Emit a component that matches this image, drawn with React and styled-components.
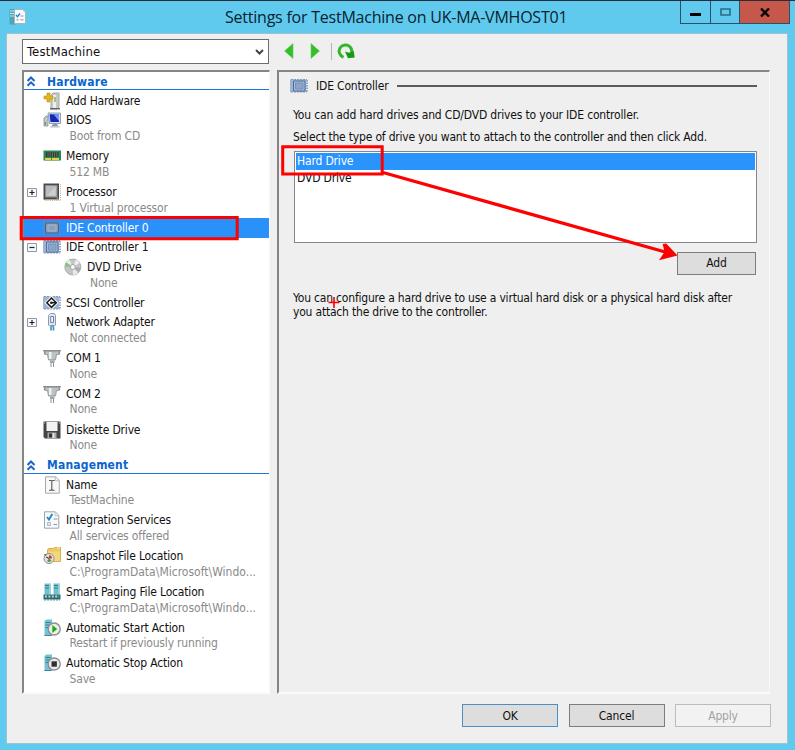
import React, { useState } from "react";
import styled, { createGlobalStyle } from "styled-components";

const GlobalStyle = createGlobalStyle`
  body {
    margin: 0;
    overflow: hidden;
  }
`;

const Window = styled.div`
  position: relative;
  display: flex;
  flex-direction: column;
  width: 795px;
  height: 750px;
  padding: 0 7px 6px 6px;
  box-sizing: border-box;
  border-top: 1px solid #2a2c3c;
  background: #5fcaed;
  color: #111;
  font-family: "DejaVu Sans Condensed", "DejaVu Sans", sans-serif;
  font-size: 12px;
  letter-spacing: -0.17px;
`;

const TitleBar = styled.div`
  display: flex;
  align-items: flex-start;
  height: 32px;
  flex: none;
`;

const TitleIcon = styled.div`
  width: 17px;
  height: 17px;
  margin: 7px 0 0 3px;
`;

const Title = styled.div`
  flex: 1;
  padding: 5px 0 0 199px;
  color: #0a2230;
  font-family: "Open Sans", "Noto Sans", sans-serif;
  font-size: 16px;
  line-height: 22px;
  letter-spacing: -0.23px;
  white-space: nowrap;
`;

const WindowButtons = styled.div`
  display: flex;
  height: 23px;
  margin-right: -2px;
  box-sizing: border-box;
  border: 1px solid #285266;
  border-top: 0;
`;

const WindowButton = styled.div`
  display: flex;
  align-items: center;
  justify-content: center;
  width: ${(props) => props.$width}px;
  background: ${(props) => (props.$close ? "#c5574b" : "transparent")};
  & + & {
    border-left: 1px solid #285266;
  }
`;

const Client = styled.div`
  display: flex;
  flex-direction: column;
  flex: 1;
  padding: 5px 17px 0 15px;
  box-sizing: border-box;
  border: 1px solid #9cc3d2;
  background: #efefef;
`;

const Toolbar = styled.div`
  display: flex;
  align-items: center;
  height: 25px;
  flex: none;
`;

const Combo = styled.div`
  display: flex;
  align-items: center;
  justify-content: space-between;
  width: 247px;
  height: 25px;
  padding: 0 4px 0 4px;
  box-sizing: border-box;
  border: 1px solid #6c6c6c;
  background: #fff;
  font-size: 13px;
  letter-spacing: 0.15px;
`;

const ToolButtons = styled.div`
  display: flex;
  align-items: center;
  height: 23px;
  margin-left: 14px;
  align-self: flex-start;
`;

const Panels = styled.div`
  display: flex;
  gap: 7px;
  height: 624px;
  margin-top: 6px;
  flex: none;
`;

const Sunken = styled.div`
  box-sizing: border-box;
  border: solid;
  border-width: 2px 1px 2px 2px;
  border-color: #858585 #fafafa #fafafa #858585;
`;

const Tree = styled(Sunken)`
  width: 248px;
  flex: none;
  background: #fff;
`;

const GroupHeader = styled.div`
  display: flex;
  align-items: center;
  gap: 10px;
  height: 18px;
  padding: 1px 0 0 2px;
  margin-bottom: 1.2px;
  box-sizing: border-box;
  box-shadow: inset 0 -1px #1a72dc;
  color: #0a64cf;
  font-weight: bold;
  letter-spacing: 0.18px;
`;

const Node = styled.div`
  display: flex;
  align-items: center;
  height: 19.5px;
  padding-left: ${(props) => (props.$level ? 21 : 0)}px;
  background: ${(props) => (props.$selected ? "#2a91fb" : "transparent")};
  color: ${(props) => (props.$selected ? "#fff" : "#111")};
  cursor: default;
  white-space: nowrap;
`;

const Toggle = styled.div`
  display: flex;
  width: 15px;
  height: 9px;
  padding-left: 3px;
`;

const NodeIcon = styled.div`
  display: flex;
  width: 19px;
  height: 18px;
  margin: 0 4px 0 1px;
`;

const Detail = styled.div`
  height: 16.3px;
  padding-left: ${(props) => (props.$level ? 66 : 45.5)}px;
  color: #8a8a8a;
  line-height: 13px;
  letter-spacing: ${(props) => props.$track || -0.17}px;
  white-space: nowrap;
`;

const Content = styled(Sunken)`
  flex: 1;
  padding: 5px 12px 0 13px;
`;

const Caption = styled.div`
  display: flex;
  align-items: center;
  height: 18px;
  &::after {
    content: "";
    flex: 1;
    height: 2px;
    margin-left: 9px;
    background: #5c5c5c;
  }
`;

const CaptionIcon = styled.div`
  display: flex;
  width: 18px;
  height: 18px;
  margin: 0 8px 0 -2px;
`;

const Paragraph = styled.p`
  margin: ${(props) => props.$top}px 0 0 1px;
  line-height: 14.5px;
  letter-spacing: ${(props) => props.$track || -0.17}px;
  white-space: nowrap;
`;

const List = styled.div`
  height: 92px;
  margin: 6px 0 0 2px;
  padding: 1px;
  box-sizing: border-box;
  border: 1px solid #83878d;
  background: #fff;
`;

const Option = styled.div`
  height: 17.5px;
  padding-left: 1px;
  line-height: 17px;
  background: ${(props) => (props.$selected ? "#2a93fc" : "transparent")};
  color: ${(props) => (props.$selected ? "#fff" : "#111")};
`;

const Button = styled.button`
  width: ${(props) => props.$width || 96}px;
  height: 23px;
  padding: 0;
  box-sizing: border-box;
  border: 1px solid ${(props) => (props.$primary ? "#4b8fc4" : "#7d7d7d")};
  border-radius: 0;
  background: #dddddd;
  color: #111;
  font: inherit;
  letter-spacing: inherit;
  &:disabled {
    border-color: #b9bcc0;
    background: #f2f2f2;
    color: #a3a3a3;
  }
`;

const AddRow = styled.div`
  display: flex;
  justify-content: flex-end;
  padding: 9px 1px 0 0;
`;

const Footer = styled.div`
  display: flex;
  justify-content: flex-end;
  gap: 10.5px;
  padding-top: 10px;
  margin-right: -1px;
`;

const Annotations = styled.svg`
  position: absolute;
  top: -1px;
  left: 0;
  pointer-events: none;
`;

const Svg = ({ w = 18, h = 18, children }) => (
  <svg width={w} height={h} viewBox={`0 0 ${w} ${h}`} fill="none">
    {children}
  </svg>
);

const Chip = () => (
  <Svg>
    <path d="M0 2.5h16v12.500H0z" fill="#9fb4d1" />
    <path d="M17 3v12" stroke="#6f8fba" strokeWidth="1.500" strokeDasharray="1.500 1" />
    <path d="M1 2.500h16M1 15h16" stroke="#7f9bc2" strokeDasharray="2 1" />
    <path d="M3.500 4h11.500v10H3.500z" fill="#a9bcd7" stroke="#4d6f9e" />
    <path d="M5.500 6h7.500v6H5.500z" fill="#8ba6ca" stroke="#7592bb" />
  </Svg>
);

const ChipSelected = () => (
  <Svg>
    <path d="M.500 2.500h16.500v12.500H.500z" fill="#5e8cc2" />
    <path d="M2.500 4h13v10h-13z" fill="#8099bb" stroke="#4a6283" />
    <path d="M5 6h8v6H5z" fill="#8ba0bd" stroke="#a7b8d0" />
  </Svg>
);

const AddHardware = () => (
  <Svg>
    <path d="M8 3l2-2h6v14l-2 2H8z" fill="#c7c9c7" stroke="#a5a8a5" />
    <path d="M10 3h3v13h-3z" fill="#efefec" />
    <path d="M12 5v5" stroke="#82ae70" strokeWidth="1.5" />
    <path d="M7 16.7h10" stroke="#666" strokeWidth="1.5" />
    <path d="M4 1h3v3h3v3H7v3H4V7H1V4h3z" fill="#e4b51c" stroke="#bc9013" strokeWidth=".6" />
  </Svg>
);

const Bios = () => (
  <Svg>
    <path d="M1 7l2-2h2v10H1z" fill="#c2c9cd" stroke="#858f96" strokeWidth=".8" />
    <path d="M2.4 11v3" stroke="#55a348" strokeWidth="1.3" />
    <path d="M5 2h12.5v10.5H6.5z" fill="#d2dceb" stroke="#8da0bc" />
    <path d="M6.5 3.3H16v7.7H7.5z" fill="#1328b6" />
    <path d="M10.5 3.3H16V10z" fill="#7795f0" />
    <path d="M10 13h4l1.5 2.6H8.3z" fill="#8c99a6" />
    <path d="M7 16h10" stroke="#b5bcc4" />
  </Svg>
);

const Memory = () => (
  <Svg>
    <path d="M.5 3.500h17.5v10H.5z" fill="#278557" />
    <path d="M3 5h12.5v5H3z" fill="#343e30" />
    <path d="M5 5v5M7.2 5v5M9.4 5v5M11.6 5v5M13.8 5v5" stroke="#8b957f" strokeWidth=".6" />
    <path d="M2 11h6v2H2zM9 11h7v2H9z" fill="#e7d64c" />
    <path d="M2 13.3h14" stroke="#a8a23a" strokeDasharray="1 1" />
  </Svg>
);

const Processor = () => (
  <Svg>
    <path d="M1.5 1.5h16v16h-16z" stroke="#c4a880" strokeDasharray="1 1.2" />
    <path d="M.5.5H16v16H.5z" fill="#4a4a4a" />
    <path d="M2.500 2.500h11.500v11.500H2.500z" fill="#b9bcbc" stroke="#8b8d8d" />
    <path d="M4 12.5L12.5 4v8.5z" fill="#cdd0d0" />
    <circle cx="14.500" cy="15" r=".8" fill="#c9b37f" />
  </Svg>
);

const Disc = () => (
  <Svg>
    <circle cx="8.8" cy="9" r="8" fill="#c4c5c4" stroke="#a0a2a1" strokeWidth=".8" />
    <path d="M8.8 9L2 4.9A8 8 0 0 1 5.5 1.8z" fill="#eceeec" />
    <path d="M8.8 9L1 8.5A8 8 0 0 1 2.5 4.5z" fill="#7ecb78" />
    <path d="M8.8 9L12 1.7A8 8 0 0 1 15.6 5z" fill="#edeeed" />
    <path d="M8.8 9L9 17a8 8 0 0 0 5-2z" fill="#e9e9e9" />
    <path d="M8.8 9l7.9 1a8 8 0 0 1-2 4z" fill="#aaa" />
    <circle cx="8.8" cy="9" r="2.6" fill="#eee" stroke="#999" strokeWidth=".8" />
    <circle cx="8.8" cy="9" r="1" fill="#fff" />
  </Svg>
);

const Scsi = () => (
  <Svg>
    <path d="M0 2.500h16v12.500H0z" fill="#9fb4d1" />
    <path d="M17 3v12" stroke="#6f8fba" strokeWidth="1.500" strokeDasharray="1.500 1" />
    <path d="M1 2.500h16M1 15h16" stroke="#7f9bc2" strokeDasharray="2 1" />
    <path d="M8.500 4l4.700 4.700-4.700 4.700L3.800 8.700z" fill="#fff" stroke="#f2f5f8" strokeWidth="3.500" />
    <path d="M8.500 4l4.700 4.700-4.700 4.700L3.800 8.700z" fill="#fff" stroke="#1b1b1b" strokeWidth="1.500" />
    <path d="M13.500 8.700H8.200" stroke="#1b1b1b" strokeWidth="1.500" />
    <circle cx="8.3" cy="8.700" r="1.3" fill="#1b1b1b" />
  </Svg>
);

const Network = () => (
  <Svg>
    <path d="M5.5 2.5l2-2h4l1 2V12l-1.5 1.5h-4L5.5 12z" fill="#dfe5ee" stroke="#8e9bb4" />
    <path d="M7.7 3.5h2.8v6H7.7z" fill="#f5f7fb" stroke="#6e7fa3" />
    <path d="M7.5 12.5h3.5" stroke="#7d8ca7" />
    <path d="M8 14v3.5M10.5 14v3.5" stroke="#2496c8" strokeWidth="1.6" />
  </Svg>
);

const ComPort = () => (
  <Svg>
    <path d="M1.500 2h15l-1 3.500h-2L12.500 11h-7L4.500 5.500h-2z" fill="#bcc1c3" stroke="#868c90" strokeWidth=".8" />
    <path d="M0 1.700h18M1.500 1v4.500M16.500 1v4.500" stroke="#8a9195" strokeWidth="1.2" />
    <path d="M6 3h2.500v7H6z" fill="#eef1f1" />
    <path d="M7 11.500h4.500V14H7z" fill="#9ea5a8" />
    <path d="M8 14v4M10.500 14v4" stroke="#8c9397" />
  </Svg>
);

const Diskette = () => (
  <Svg>
    <path d="M.5.5h17v17H2L.5 16z" fill="#454545" />
    <path d="M3.5 1h11v9h-11z" fill="#f3f3f3" />
    <path d="M4.5 11.5h9v6h-9z" fill="#a9adad" />
    <path d="M6 12.5h3v4H6z" fill="#333" />
    <path d="M10.5 12v5" stroke="#e4e6e6" strokeWidth="1.5" />
    <path d="M1.2 2h1M15.8 2h1" stroke="#ddd" />
  </Svg>
);

const NamePage = () => (
  <Svg>
    <path d="M2.5.8h10l3.8 3.7v12.7H2.5z" fill="#f8f8f8" stroke="#a8a8a8" />
    <path d="M12.3 1v3.7H16" stroke="#bbb" />
    <path d="M6 4.5h2l.8.7.8-.7h2M8.8 5v8.5M6 14.2h2l.8-.7.8.7h2" stroke="#555" strokeWidth="1.1" />
  </Svg>
);

const Checklist = () => (
  <Svg>
    <path d="M1.5.8h10.8l3.5 3.6v12.8H1.5z" fill="#f8fafb" stroke="#9ba6ad" />
    <path d="M12 1v3.7h3.7" stroke="#bbc4ca" />
    <path d="M4 6l2 2.5L9.3 3" stroke="#2387c9" strokeWidth="1.9" />
    <path d="M10.5 8h4M10.5 13.5h3.5" stroke="#8696a2" />
    <path d="M4.5 11.5h3v3h-3z" fill="#e2eaf0" stroke="#9babb9" strokeWidth=".8" />
  </Svg>
);

const Snapshot = () => (
  <Svg>
    <path d="M4.5 3l1-1.5h5L12 0h5.5v14.5h-13z" fill="#ecc95c" stroke="#cda43d" strokeWidth=".8" />
    <path d="M5 4.5h12V14H5z" fill="#f2d77c" />
    <path d="M14 1h3" stroke="#e9f1f5" />
    <circle cx="6" cy="11.5" r="5" fill="#e5e5e0" stroke="#8e8e86" />
    <path d="M1 7l3 .5-2 2z" fill="#666" />
    <path d="M6 11.5V8.3A3.2 3.2 0 0 1 9 11.5z" fill="#c8342d" />
    <path d="M6 11.5l2.6 1.8A3.2 3.2 0 0 1 4 14z" fill="#4c9a4b" />
    <path d="M6 11.5L3.2 10" stroke="#444" strokeWidth="1.3" />
  </Svg>
);

const SmartPaging = () => (
  <Svg>
    <path d="M1.5.5h6.5v11H1.5zM10.5.5H17v11h-6.5z" fill="#70c1cf" />
    <path d="M2 2.5h4M11 2.5h4M2 5h4M11 5h4" stroke="#397d8e" />
    <path d="M7 1v10M16 1v10" stroke="#b9e4e9" />
    <path d="M.5 11.5h17v5H.5z" fill="#2f6870" />
    <path d="M2 13.5h14" stroke="#b6d8d8" strokeWidth="1.8" strokeDasharray="2 1.4" />
    <path d="M1 17h16" stroke="#4d9fa6" strokeDasharray="2 1" />
  </Svg>
);

const Action = ({ stop }) => (
  <Svg>
    <path d="M1.5 2l2-1.5H9V17H1.5z" fill="#74c3d3" />
    <path d="M2.5 3.5h5M2.5 6h4M2.5 8.5h3" stroke="#397f90" />
    <path d="M1.5 16.5h7" stroke="#3e8796" />
    <circle cx="11.2" cy="10" r="6" fill="#ededed" stroke="#8b8f8f" strokeWidth="1.4" />
    {stop ? (
      <path d="M8.5 7.3h5.4v5.4H8.5z" fill="#303030" />
    ) : (
      <path d="M9.3 6l4.9 4-4.9 4z" fill="#20ac10" />
    )}
  </Svg>
);

const TitleGlyph = () => (
  <Svg w={17} h={17}>
    <path d="M.5 1h7v15.5H.5z" fill="#4fa5b5" />
    <path d="M1 3h4M1 5.5h4M1 8h4" stroke="#c4e9ee" />
    <path d="M5.5 1.5h8L16.5 4v11.5h-11z" fill="#f8fafb" stroke="#a8b3ba" />
    <path d="M7 7l1.5 1.7L11 5.5" stroke="#2387c9" strokeWidth="1.4" />
    <path d="M11.5 8h3M11.5 11.8h3M7.5 11.8h2" stroke="#8494a1" />
  </Svg>
);

const Chevrons = () => (
  <Svg w={11} h={11}>
    <path d="M1.5 5L5 1.5 8.5 5M1.5 9.8L5 6.3l3.5 3.5" stroke="#1767c6" strokeWidth="2" />
  </Svg>
);

const ToggleGlyph = ({ open }) => (
  <Svg w={10} h={10}>
    <path d="M.5.5h9v8h-9z" fill="#f4f7fb" stroke="#8f9bab" />
    <path d={open ? "M2.500 4.5h5" : "M2.500 4.5h5M5 2v5"} stroke="#222" strokeWidth="1.2" />
  </Svg>
);

const hardware = [
  { name: "Add Hardware", icon: AddHardware },
  { name: "BIOS", icon: Bios, detail: "Boot from CD" },
  { name: "Memory", icon: Memory, detail: "512 MB" },
  { name: "Processor", icon: Processor, detail: "1 Virtual processor", toggle: "closed" },
  { name: "IDE Controller 0", icon: Chip, selectedIcon: ChipSelected },
  { name: "IDE Controller 1", icon: Chip, toggle: "open" },
  { name: "DVD Drive", icon: Disc, detail: "None", level: 1 },
  { name: "SCSI Controller", icon: Scsi },
  { name: "Network Adapter", icon: Network, detail: "Not connected", toggle: "closed" },
  { name: "COM 1", icon: ComPort, detail: "None" },
  { name: "COM 2", icon: ComPort, detail: "None" },
  { name: "Diskette Drive", icon: Diskette, detail: "None" },
];

const path = "C:\\ProgramData\\Microsoft\\Windo...";

const management = [
  { name: "Name", icon: NamePage, detail: "TestMachine" },
  { name: "Integration Services", icon: Checklist, detail: "All services offered" },
  { name: "Snapshot File Location", icon: Snapshot, detail: path, track: 0.01 },
  { name: "Smart Paging File Location", icon: SmartPaging, detail: path, track: 0.01 },
  { name: "Automatic Start Action", icon: Action, detail: "Restart if previously running" },
  { name: "Automatic Stop Action", icon: () => <Action stop />, detail: "Save" },
];

function Group({ title, items, selected, onSelect }) {
  return (
    <>
      <GroupHeader>
        <Chevrons />
        {title}
      </GroupHeader>
      {items.map((item) => {
        const isSelected = item.name === selected;
        const Icon = (isSelected && item.selectedIcon) || item.icon;
        return (
          <React.Fragment key={item.name}>
            <Node $level={item.level} $selected={isSelected} onClick={() => onSelect(item.name)}>
              <Toggle>{item.toggle && <ToggleGlyph open={item.toggle === "open"} />}</Toggle>
              <NodeIcon>
                <Icon />
              </NodeIcon>
              {item.name}
            </Node>
            {item.detail && (
              <Detail $level={item.level} $track={item.track}>
                {item.detail}
              </Detail>
            )}
          </React.Fragment>
        );
      })}
    </>
  );
}

export default function App() {
  const [node, setNode] = useState("IDE Controller 0");
  const [drive, setDrive] = useState("Hard Drive");

  return (
    <Window>
      <GlobalStyle />
      <TitleBar>
        <TitleIcon>
          <TitleGlyph />
        </TitleIcon>
        <Title>Settings for TestMachine on UK-MA-VMHOST01</Title>
        <WindowButtons>
          <WindowButton $width={29}>
            <Svg w={11} h={10}>
              <path d="M0 7.5h11" stroke="#000" strokeWidth="3" />
            </Svg>
          </WindowButton>
          <WindowButton $width={28}>
            <Svg w={11} h={8}>
              <path d="M1 1h9v6H1z" stroke="#2d6c83" strokeWidth="1.6" />
            </Svg>
          </WindowButton>
          <WindowButton $width={49} $close>
            <Svg w={10} h={9}>
              <path d="M1 .5l8 8M9 .5l-8 8" stroke="#0c0606" strokeWidth="2.4" />
            </Svg>
          </WindowButton>
        </WindowButtons>
      </TitleBar>
      <Client>
        <Toolbar>
          <Combo>
            TestMachine
            <Svg w={9} h={6}>
              <path d="M1 1l3.5 3.5L8 1" stroke="#444" strokeWidth="2" />
            </Svg>
          </Combo>
          <ToolButtons>
            <Svg w={76} h={18}>
              <path d="M10 1.5v15L1.5 9z" fill="#35bd2a" stroke="#5fcf55" strokeWidth=".6" />
              <path d="M28 1.5v15L36.5 9z" fill="#35bd2a" stroke="#5fcf55" strokeWidth=".6" />
              <path d="M48.5 1v17" stroke="#b5b5b5" />
              <path
                d="M60.5 15.3C56.5 13.500 55 9.500 57 6c2-3.300 7-4 10-1.200 1.500 1.400 2 3.200 1.700 5.500"
                stroke="#35b52b"
                strokeWidth="3"
              />
              <path d="M62 9.500l4 1.200 4.700-1.700 1 6.500-6.700.8z" fill="#159a17" />
            </Svg>
          </ToolButtons>
        </Toolbar>
        <Panels>
          <Tree>
            <Group title="Hardware" items={hardware} selected={node} onSelect={setNode} />
            <Group title="Management" items={management} selected={node} onSelect={setNode} />
          </Tree>
          <Content>
            <Caption>
              <CaptionIcon>
                <Chip />
              </CaptionIcon>
              IDE Controller
            </Caption>
            <Paragraph $top={13}>
              You can add hard drives and CD/DVD drives to your IDE controller.
            </Paragraph>
            <Paragraph $top={7.5} $track={-0.19}>
              Select the type of drive you want to attach to the controller and then click Add.
            </Paragraph>
            <List>
              {["Hard Drive", "DVD Drive"].map((name) => (
                <Option key={name} $selected={name === drive} onClick={() => setDrive(name)}>
                  {name}
                </Option>
              ))}
            </List>
            <AddRow>
              <Button $width={79}>Add</Button>
            </AddRow>
            <Paragraph $top={16} $track={-0.2}>
              You can configure a hard drive to use a virtual hard disk or a physical hard disk after
              <br />
              you attach the drive to the controller.
            </Paragraph>
          </Content>
        </Panels>
        <Footer>
          <Button $primary>OK</Button>
          <Button>Cancel</Button>
          <Button disabled>Apply</Button>
        </Footer>
      </Client>
      <Annotations width="795" height="750" viewBox="0 0 795 750" fill="none">
        <path d="M21.2 217.5h216v21.3h-216zM282.7 146.7h99.5v27.3h-99.5z" stroke="#f00" strokeWidth="3" />
        <path d="M383 172.5L667 252.5" stroke="#f00" strokeWidth="3.3" />
        <path d="M677.5 255.5l-18.5 4.8 5.5-8.3-1.8-8 3.5-.5z" fill="#f00" />
        <path d="M328.5 302.5h11M334 297v11" stroke="#f00" strokeWidth="1.6" />
      </Annotations>
    </Window>
  );
}
